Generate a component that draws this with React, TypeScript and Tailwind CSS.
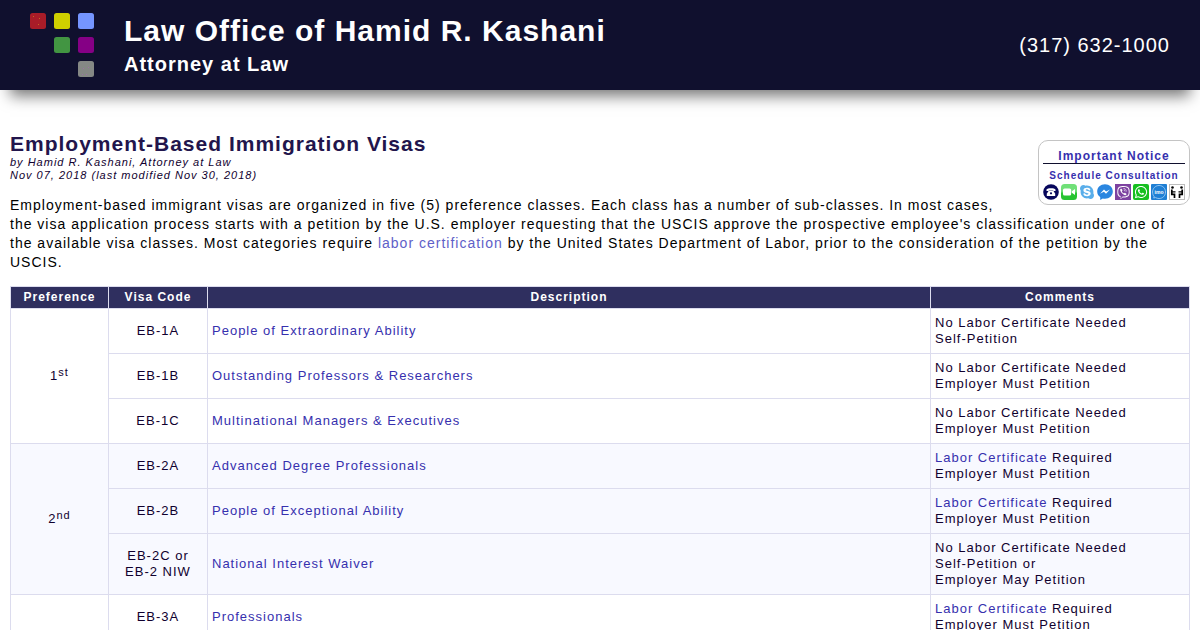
import type { ReactNode } from 'react'
import { FaSkype, FaViber, FaWhatsapp } from 'react-icons/fa'

type VisaRow = {
  code: string[]
  description: string
  comments: ReactNode[]
}

type VisaGroup = {
  rank: string
  suffix: string
  rows: VisaRow[]
}

const laborCertificate = (
  <>
    <a href="#labor-certification" className="text-[#3630ae] hover:underline">Labor Certificate</a> Required
  </>
)

const groups: VisaGroup[] = [
  {
    rank: '1',
    suffix: 'st',
    rows: [
      { code: ['EB-1A'], description: 'People of Extraordinary Ability', comments: ['No Labor Certificate Needed', 'Self-Petition'] },
      { code: ['EB-1B'], description: 'Outstanding Professors & Researchers', comments: ['No Labor Certificate Needed', 'Employer Must Petition'] },
      { code: ['EB-1C'], description: 'Multinational Managers & Executives', comments: ['No Labor Certificate Needed', 'Employer Must Petition'] },
    ],
  },
  {
    rank: '2',
    suffix: 'nd',
    rows: [
      { code: ['EB-2A'], description: 'Advanced Degree Professionals', comments: [laborCertificate, 'Employer Must Petition'] },
      { code: ['EB-2B'], description: 'People of Exceptional Ability', comments: [laborCertificate, 'Employer Must Petition'] },
      {
        code: ['EB-2C or', 'EB-2 NIW'],
        description: 'National Interest Waiver',
        comments: ['No Labor Certificate Needed', 'Self-Petition or', 'Employer May Petition'],
      },
    ],
  },
  {
    rank: '3',
    suffix: 'rd',
    rows: [
      { code: ['EB-3A'], description: 'Professionals', comments: [laborCertificate, 'Employer Must Petition'] },
      { code: ['EB-3B'], description: 'Skilled Workers', comments: [laborCertificate, 'Employer Must Petition'] },
      { code: ['EB-3C'], description: 'Other Workers', comments: [laborCertificate, 'Employer Must Petition'] },
    ],
  },
]

function Logo() {
  return (
    <svg width="64" height="64" viewBox="0 0 64 64" className="shrink-0" aria-hidden="true">
      <rect x="0" y="0" width="16" height="16" rx="2.5" fill="#a81c28" />
      <rect x="24" y="0" width="16" height="16" rx="2.5" fill="#cfcf00" />
      <rect x="48" y="0" width="16" height="16" rx="2.5" fill="#7595ff" />
      <rect x="24" y="24" width="16" height="16" rx="2.5" fill="#429542" />
      <rect x="48" y="24" width="16" height="16" rx="2.5" fill="#850085" />
      <rect x="48" y="48" width="16" height="16" rx="2.5" fill="#858885" />
      <path d="M3 3h1v1H3zM9 5h1v1H9zM8 11h1v1H8z" fill="#c06a20" />
      <path d="M53 55h1v1h-1zM58 54h1v1h-1zM52 61h1v1h-1zM56 61h1v1h-1z" fill="#9d70a5" />
    </svg>
  )
}

function PhoneIcon() {
  return (
    <svg width="16" height="16" viewBox="0 0 16 16" aria-hidden="true">
      <circle cx="8" cy="8" r="7.8" fill="#07075c" />
      <path d="M3.5 7V5.4C4.5 3.7 11.5 3.7 12.5 5.400V7h-2.300v-.8H5.800V7z" fill="#fff" />
      <path d="M5.800 6.600h4.400l2 3.200v2.300H3.800V9.800z" fill="#fff" />
      <circle cx="8" cy="9.3" r="1.1" fill="#07075c" />
    </svg>
  )
}

function FaceTimeIcon() {
  return (
    <svg width="16" height="16" viewBox="0 0 16 16" aria-hidden="true">
      <defs>
        <linearGradient id="facetime" x1="0" y1="0" x2="0" y2="1">
          <stop offset="0.45" stopColor="#70e078" />
          <stop offset="0.6" stopColor="#27c331" />
        </linearGradient>
      </defs>
      <rect width="16" height="16" rx="3.5" fill="url(#facetime)" />
      <rect x="2" y="4.5" width="8.2" height="7" rx="1.6" fill="#fff" />
      <path d="M10.8 7.3 14 5v6l-3.2-2.3z" fill="#fff" />
    </svg>
  )
}

function MessengerIcon() {
  return (
    <svg width="16" height="16" viewBox="0 0 16 16" aria-hidden="true">
      <path d="M8 .3c4.4 0 7.8 3.1 7.8 7.2S12.4 14.7 8 14.7c-.8 0-1.5-.1-2.2-.3L3.2 15.9v-2.8C1.3 11.8.2 9.8.2 7.5.2 3.4 3.6.3 8 .3z" fill="#2a86e0" />
      <path d="m3 9.8 4-4.2 2.1 2 3.9-2-4 4.2-2.1-2z" fill="#fff" />
    </svg>
  )
}

function ImoIcon() {
  return (
    <svg width="16" height="16" viewBox="0 0 16 16" aria-hidden="true">
      <rect width="16" height="16" rx="1" fill="#1f7fd4" />
      <path d="M3.3 12.9 2.6 14l2-.4c1 .6 2.2.9 3.5.9 3.6 0 6.4-2.8 6.4-6.5S11.7 1.5 8.1 1.5 1.6 4.3 1.6 8c0 1.9.6 3.6 1.7 4.9z" fill="none" stroke="#9fcdf4" strokeWidth="0.9" />
      <text x="8" y="10" textAnchor="middle" fontSize="5" fontWeight="bold" letterSpacing="0" fill="#fff">imo</text>
    </svg>
  )
}

function InPersonIcon() {
  return (
    <svg width="16" height="16" viewBox="0 0 16 16" aria-hidden="true">
      <rect x="0.5" y="0.5" width="15" height="15" fill="#fff" stroke="#bdbdbd" />
      <circle cx="3.500" cy="3.5" r="1.3" fill="#000" />
      <circle cx="12.5" cy="3.5" r="1.3" fill="#000" />
      <path d="M2.8 5.5v4.8h2.700V14M13.200 5.500v4.800h-2.700V14" fill="none" stroke="#000" strokeWidth="1.700" />
      <path d="M3 7.800h3.500M13 7.800H9.500" fill="none" stroke="#000" strokeWidth="1.200" />
    </svg>
  )
}

const contacts = [
  { name: 'Phone', icon: <PhoneIcon /> },
  { name: 'FaceTime', icon: <FaceTimeIcon /> },
  { name: 'Skype', icon: <FaSkype className="size-4 text-[#5aaeea]" /> },
  { name: 'Messenger', icon: <MessengerIcon /> },
  {
    name: 'Viber',
    icon: <span className="flex size-4 items-center justify-center bg-[#7d42a0] text-white"><FaViber size={13} /></span>,
  },
  {
    name: 'WhatsApp',
    icon: <span className="flex size-4 items-center justify-center rounded-xs bg-[#16bf20] text-white"><FaWhatsapp size={14} /></span>,
  },
  { name: 'imo', icon: <ImoIcon /> },
  { name: 'In person', icon: <InPersonIcon /> },
]

function NoticeBox() {
  return (
    <aside className="rounded-[10px] border border-[#c4c4c4] px-1 pt-2 pb-1 text-center font-bold text-[#3630ae]">
      <a href="#notice" className="block border-b border-[#10102e] text-xs leading-[14px]">Important Notice</a>
      <a href="#schedule" className="mt-1.5 block text-[10px] leading-3">Schedule Consultation</a>
      <div className="mt-0.5 flex gap-0.5">
        {contacts.map(({ name, icon }) => (
          <a key={name} href="#schedule" aria-label={name} className="size-4">
            {icon}
          </a>
        ))}
      </div>
    </aside>
  )
}

const cell = 'border border-[#dcdcee] px-1 py-1.5'

function VisaTable() {
  return (
    <table className="mt-3.5 w-full table-fixed border-collapse text-[13px] leading-4 text-[#10002e]">
      <colgroup>
        <col className="w-[98px]" />
        <col className="w-[99px]" />
        <col />
        <col className="w-[259px]" />
      </colgroup>
      <thead>
        <tr className="bg-[#2f2f5f] text-xs leading-[13px] text-white">
          {['Preference', 'Visa Code', 'Description', 'Comments'].map((title) => (
            <th key={title} scope="col" className="border border-[#dcdcee] py-1 font-bold">{title}</th>
          ))}
        </tr>
      </thead>
      {groups.map((group) => (
        <tbody key={group.rank} className="even:bg-[#f8f9ff]">
          {group.rows.map((row, i) => (
            <tr key={row.description}>
              {i === 0 && (
                <td rowSpan={group.rows.length} className={`${cell} text-center`}>
                  {group.rank}
                  <sup className="-top-1 text-[11px]">{group.suffix}</sup>
                </td>
              )}
              <td className={`${cell} text-center`}>
                {row.code.map((line) => <div key={line}>{line}</div>)}
              </td>
              <td className={cell}>
                <a href="#visa" className="text-[#3630ae] hover:underline">{row.description}</a>
              </td>
              <td className={cell}>
                {row.comments.map((line, n) => <div key={n}>{line}</div>)}
              </td>
            </tr>
          ))}
        </tbody>
      ))}
    </table>
  )
}

export default function App() {
  return (
    <div className="bg-white font-['Liberation_Sans',Arial,sans-serif] tracking-[1px] text-[#10002e]">
      <header className="flex items-center bg-[#10102e] px-[30px] py-3 text-white shadow-[0_16px_14px_-10px_#777]">
        <Logo />
        <div className="ml-[30px] grow font-bold">
          <div className="text-[30px] leading-[38px]">Law Office of Hamid R. Kashani</div>
          <div className="text-xl leading-7">Attorney at Law</div>
        </div>
        <a href="tel:+13176321000" className="text-xl">(317) 632-1000</a>
      </header>

      <main className="px-2.5 pt-[42px]">
        <div className="float-right pt-2 pl-7">
          <NoticeBox />
        </div>
        <h1 className="text-[21px] leading-6 font-bold text-[#22154c]">Employment-Based Immigration Visas</h1>
        <p className="text-[11px] leading-[13px] italic">
          by Hamid R. Kashani, Attorney at Law
          <br />
          Nov 07, 2018 (last modified Nov 30, 2018)
        </p>
        <p className="mt-3.5 text-sm leading-[19px] text-black">
          Employment-based immigrant visas are organized in five (5) preference classes. Each class has a number of
          sub-classes. In most cases, the visa application process starts with a petition by the U.S. employer
          requesting that the USCIS approve the prospective employee's classification under one of the available visa
          classes. Most categories require{' '}
          <a href="#labor-certification" className="text-[#6060c8] hover:underline">labor certification</a> by the
          United States Department of Labor, prior to the consideration of the petition by the USCIS.
        </p>
        <VisaTable />
      </main>
    </div>
  )
}
